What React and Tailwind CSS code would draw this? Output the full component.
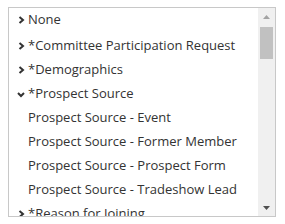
import React from "react";

const Right = () => (
  <svg width="7" height="8" viewBox="0 0 7 8" className="shrink-0">
    <path d="M1.5 1 L5 4 L1.5 7" fill="none" stroke="#333" strokeWidth="2" />
  </svg>
);
const Down = () => (
  <svg width="8" height="7" viewBox="0 0 8 7" className="shrink-0">
    <path d="M1 2 L4 5 L7 2" fill="none" stroke="#333" strokeWidth="2" />
  </svg>
);

const rows = [
  { t: "None", icon: "r" },
  { t: "*Committee Participation Request", icon: "r" },
  { t: "*Demographics", icon: "r" },
  { t: "*Prospect Source", icon: "d" },
  { t: "Prospect Source - Event" },
  { t: "Prospect Source - Former Member" },
  { t: "Prospect Source - Prospect Form" },
  { t: "Prospect Source - Tradeshow Lead" },
  { t: "*Reason for Joining", icon: "r" },
];

export default function App() {
  return (
    <div className="w-[285px] h-[224px] bg-white pt-[7px] pl-[8px]">
      <div
        className="w-[268px] h-[210px] border border-[#c8c8c8] flex overflow-hidden"
        style={{ fontFamily: "'Open Sans', sans-serif" }}
      >
        <div className="flex-1 overflow-hidden">
          {rows.map((r, i) => (
            <div
              key={i}
              className={
                i === 0
                  ? "h-[26px] pb-[2px] flex items-center text-[13px] text-[#333] whitespace-nowrap"
                  : "h-[24px] flex items-center text-[13px] text-[#333] whitespace-nowrap"
              }
            >
              <div className="w-[18px] flex justify-end pr-[2px]">
                {r.icon === "r" && <Right />}
                {r.icon === "d" && <Down />}
              </div>
              <span className="pl-[1px]">{r.t}</span>
            </div>
          ))}
        </div>
        <div className="w-[17px] bg-[#f0f0f0] flex flex-col items-center">
          <div className="h-[17px] flex items-center justify-center">
            <svg width="7" height="4" viewBox="0 0 7 4"><path d="M0 4 L3.5 0 L7 4 Z" fill="#a3a3a3" /></svg>
          </div>
          <div className="w-[13px] h-[32px] bg-[#c1c1c1] mt-[2px]" />
          <div className="flex-1" />
          <div className="h-[17px] flex items-center justify-center">
            <svg width="7" height="4" viewBox="0 0 7 4"><path d="M0 0 L7 0 L3.5 4 Z" fill="#505050" /></svg>
          </div>
        </div>
      </div>
    </div>
  );
}
